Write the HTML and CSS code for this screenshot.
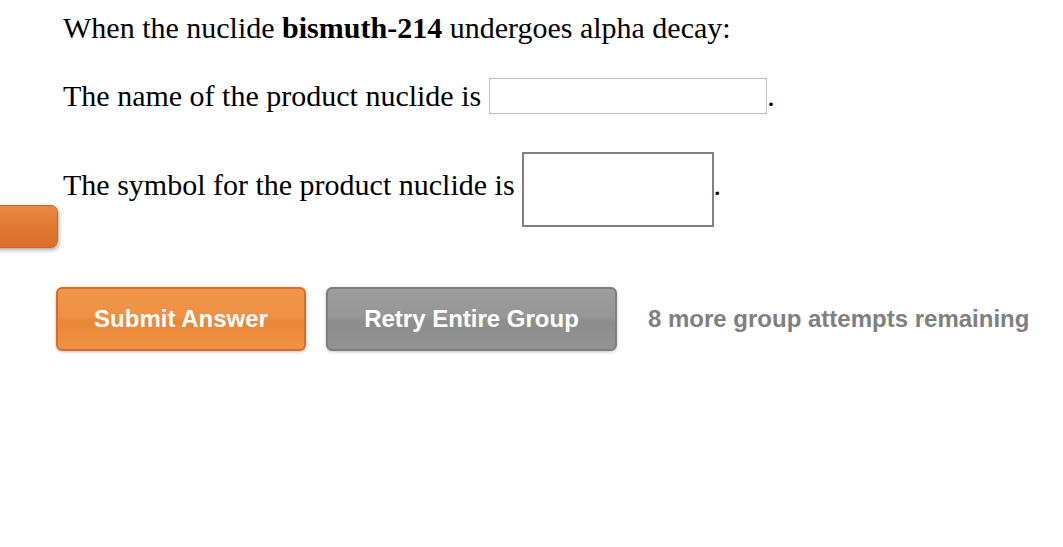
FILE: index.html
```html
<!DOCTYPE html>
<html>
<head>
<meta charset="utf-8">
<link rel="stylesheet" href="styles.css">
</head>
<body>
<div class="side-tab"></div>
<div class="content">
  <p class="q q1">When the nuclide <b>bismuth-214</b> undergoes alpha decay:</p>
  <div class="row row-name">
    <span class="txt">The name of the product nuclide is</span>
    <span class="box box-name"></span>
    <span class="txt dot">.</span>
  </div>
  <div class="row row-sym">
    <span class="txt">The symbol for the product nuclide is</span>
    <span class="box box-sym"></span>
    <span class="txt dot">.</span>
  </div>
  <div class="actions">
    <button class="btn btn-submit">Submit Answer</button>
    <button class="btn btn-retry">Retry Entire Group</button>
    <span class="remaining">8 more group attempts remaining</span>
  </div>
</div>
</body>
</html>
```
FILE: styles.css
```css
html, body {
  margin: 0;
  padding: 0;
  background: #fff;
}
body {
  position: relative;
  width: 1063px;
  height: 547px;
  overflow: hidden;
}
.side-tab {
  position: absolute;
  left: -10px;
  top: 205px;
  width: 66px;
  height: 41px;
  border-radius: 7px;
  background: linear-gradient(#ec8a45 0%, #e07a35 45%, #dc6f28 100%);
  border: 1px solid #c9642a;
  box-shadow: 1px 2px 4px rgba(0,0,0,0.35);
}
.content {
  padding: 0 0 0 63px;
  font-family: "Liberation Serif", "Times New Roman", serif;
  font-size: 30px;
  line-height: 34px;
  color: #000;
}
.q {
  margin: 0;
}
.q1 {
  padding-top: 11px;
  height: 34px;
}
.row {
  display: flex;
  align-items: center;
}
.row-name {
  margin-top: 33px;
}
.row-sym {
  margin-top: 38px;
}
.row-sym .txt {
  padding-bottom: 9px;
}
.dot {
  margin-left: 0;
}
.box {
  display: block;
  background: #fff;
  margin-left: 8px;
}
.row-sym .box {
  margin-left: 7px;
}
.box-name {
  width: 276px;
  height: 34px;
  border: 1px solid #c2c2c2;
}
.box-sym {
  width: 188px;
  height: 71px;
  border: 2px solid #808080;
}
.actions {
  margin-top: 60px;
  margin-left: -7px;
  display: flex;
  align-items: center;
}
.btn {
  font-family: "Liberation Sans", Arial, sans-serif;
  font-weight: bold;
  font-size: 24px;
  color: #fff;
  height: 64px;
  border-radius: 6px;
  padding: 0;
  box-shadow: 0 1px 3px rgba(0,0,0,0.25);
}
.btn-submit {
  width: 250px;
  background: linear-gradient(#f09548 0%, #ef9144 45%, #e98738 55%, #ef9242 100%);
  border: 2px solid #e0692a;
}
.btn-retry {
  width: 291px;
  margin-left: 20px;
  background: linear-gradient(#9c9c9c 0%, #979797 45%, #8d8d8d 55%, #939393 100%);
  border: 2px solid #7e7e7e;
}
.remaining {
  margin-left: 31px;
  font-family: "Liberation Sans", Arial, sans-serif;
  font-weight: bold;
  font-size: 24px;
  color: #808080;
}
```
